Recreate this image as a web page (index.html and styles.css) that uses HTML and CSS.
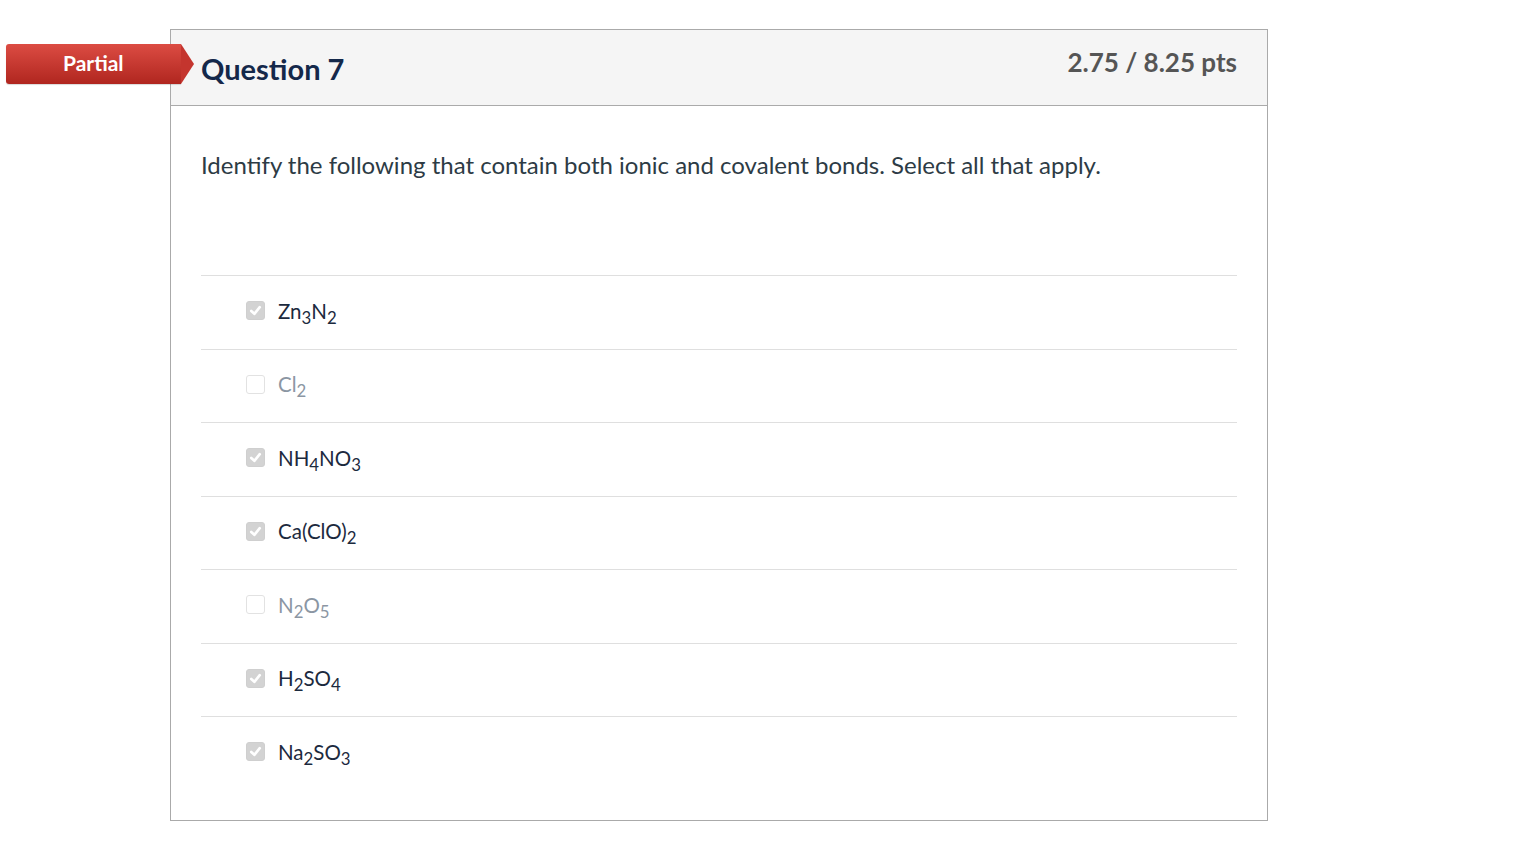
FILE: index.html
```html
<!DOCTYPE html>
<html>
<head>
<meta charset="utf-8">
<link rel="stylesheet" href="styles.css">
</head>
<body>
<div class="page">
  <div class="card">
    <div class="badge">Partial</div>
    <div class="card-header">
      <h2 class="title">Question 7</h2>
      <div class="points">2.75 / 8.25 pts</div>
    </div>
    <div class="card-body">
      <p class="question">Identify the following that contain both ionic and covalent bonds. Select all that apply.</p>
      <ul class="answers">
        <li class="answer checked"><span class="box"><svg viewBox="0 0 18 18"><path d="M4.5 9.5 L7.8 12.5 L13.5 5.5" /></svg></span><span class="label">Zn<sub>3</sub>N<sub>2</sub></span></li>
        <li class="answer"><span class="box"></span><span class="label">Cl<sub>2</sub></span></li>
        <li class="answer checked"><span class="box"><svg viewBox="0 0 18 18"><path d="M4.5 9.5 L7.8 12.5 L13.5 5.5" /></svg></span><span class="label">NH<sub>4</sub>NO<sub>3</sub></span></li>
        <li class="answer checked"><span class="box"><svg viewBox="0 0 18 18"><path d="M4.5 9.5 L7.8 12.5 L13.5 5.5" /></svg></span><span class="label">Ca(ClO)<sub>2</sub></span></li>
        <li class="answer"><span class="box"></span><span class="label">N<sub>2</sub>O<sub>5</sub></span></li>
        <li class="answer checked"><span class="box"><svg viewBox="0 0 18 18"><path d="M4.5 9.5 L7.8 12.5 L13.5 5.5" /></svg></span><span class="label">H<sub>2</sub>SO<sub>4</sub></span></li>
        <li class="answer checked"><span class="box"><svg viewBox="0 0 18 18"><path d="M4.5 9.5 L7.8 12.5 L13.5 5.5" /></svg></span><span class="label">Na<sub>2</sub>SO<sub>3</sub></span></li>
      </ul>
    </div>
  </div>
</div>
</body>
</html>
```
FILE: styles.css
```css
* { box-sizing: border-box; }
html, body { margin: 0; padding: 0; background: #fff; }
body { font-family: Lato, "Open Sans", Arial, sans-serif; color: #2d3b45; }
.page { padding: 29px 0 0 170px; }
.card {
  position: relative;
  width: 1098px;
  border: 1px solid #aaaaaa;
  background: #fff;
}
.badge {
  position: absolute;
  left: -165px;
  top: 14px;
  width: 175px;
  height: 40px;
  background: linear-gradient(#dc4c43, #b0261f);
  color: #fff;
  font-weight: 700;
  font-size: 21px;
  line-height: 38px;
  padding-left: 57px;
  border-radius: 3px 0 0 3px;
  box-shadow: 0 1px 1px rgba(0,0,0,0.15);
}
.badge::after {
  content: "";
  position: absolute;
  right: -13px;
  top: 0;
  border-left: 13px solid #c4352e;
  border-top: 20px solid transparent;
  border-bottom: 20px solid transparent;
}
.card-header {
  display: flex;
  justify-content: space-between;
  align-items: flex-start;
  background: #f5f5f5;
  border-bottom: 1px solid #aaaaaa;
  height: 76px;
  padding: 0 30px;
}
.title {
  margin: 21px 0 0;
  font-size: 29px;
  font-weight: 700;
  color: #14284a;
  line-height: 36px;
}
.points {
  margin-top: 16px;
  font-size: 26px;
  font-weight: 700;
  color: #555;
  line-height: 32px;
}
.card-body { padding: 44px 30px 30px; }
.question {
  margin: 0 0 95px;
  font-size: 24px;
  line-height: 30px;
  color: #2d3b45;
}
.answers { list-style: none; margin: 0; padding: 0; }
.answer {
  display: flex;
  align-items: center;
  height: 73.5px;
  border-top: 1px solid #dfdfdf;
  padding-left: 45px;
}
.box {
  width: 19px;
  height: 19px;
  border-radius: 3px;
  border: 1px solid #e2e2e2;
  background: #fff;
  margin-right: 13px;
  margin-top: -3px;
  display: flex;
}
.answer.checked .box { background: #d3d3d3; border-color: #cfcfcf; }
.box svg { width: 17px; height: 17px; fill: none; stroke: #ffffff; stroke-width: 2.8; stroke-linecap: round; stroke-linejoin: round; }
.label { font-size: 20.5px; color: #8b96a3; margin-top: -3px; }
.answer.checked .label { color: #1c2a3e; }
.label sub { font-size: 0.82em; vertical-align: -0.3em; line-height: 0; }
```
